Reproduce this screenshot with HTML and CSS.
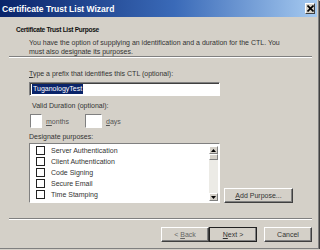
FILE: index.html
```html
<!DOCTYPE html>
<html lang="en">
<head>
    <meta charset="UTF-8">
    <title>Certificate Trust List Wizard</title>
    <link rel="stylesheet" href="styles.css">
</head>
<body>
    <div class="window">
        <!-- Title bar -->
        <div class="titlebar">
            <span class="title">Certificate Trust List Wizard</span>
            <span class="close">
                <svg width="7" height="7" viewBox="0 0 7 7"><path d="M0.5 0.5 L6.5 6.5 M6.5 0.5 L0.5 6.5" stroke="#000" stroke-width="1.6"/></svg>
            </span>
        </div>

        <!-- Header -->
        <div class="header">
            <h2>Certificate Trust List Purpose</h2>
            <p>You have the option of supplying an identification and a duration for the CTL. You must also designate its purposes.</p>
        </div>
        <div class="rule"></div>

        <!-- Body -->
        <div class="content">
            <label class="field-label"><u>T</u>ype a prefix that identifies this CTL (optional):</label>
            <div class="textbox"><span class="selected">TuganologyTest</span></div>

            <label class="field-label duration-label">Valid Duration (optional):</label>
            <div class="duration">
                <div class="smallbox"></div>
                <span class="unit"><u>m</u>onths</span>
                <div class="smallbox wide"></div>
                <span class="unit"><u>d</u>ays</span>
            </div>

            <label class="field-label">Designate purposes:</label>
            <div class="purpose-row">
                <div class="listbox">
                    <ul class="items">
                        <li><span class="check"></span>Server Authentication</li>
                        <li><span class="check"></span>Client Authentication</li>
                        <li><span class="check"></span>Code Signing</li>
                        <li><span class="check"></span>Secure Email</li>
                        <li><span class="check"></span>Time Stamping</li>
                    </ul>
                    <div class="scrollbar">
                        <div class="arrow">
                            <svg width="5" height="3" viewBox="0 0 5 3"><path d="M2.5 0 L5 3 L0 3 Z" fill="#000"/></svg>
                        </div>
                        <div class="thumb"></div>
                        <div class="track"></div>
                        <div class="arrow">
                            <svg width="5" height="3" viewBox="0 0 5 3"><path d="M0 0 L5 0 L2.5 3 Z" fill="#000"/></svg>
                        </div>
                    </div>
                </div>
                <button class="button add-btn"><u>A</u>dd Purpose...</button>
            </div>
        </div>

        <div class="rule"></div>

        <!-- Navigation buttons -->
        <div class="nav">
            <button class="button"><span class="dim">&lt; <u>B</u>ack</span></button>
            <button class="button default"><u>N</u>ext &gt;</button>
            <button class="button cancel">Cancel</button>
        </div>
    </div>
</body>
</html>
```

FILE: styles.css
```css
body {
    margin: 0;
    padding: 0;
    background: #d4d0c8;
    font-family: "Liberation Sans", Arial, sans-serif;
    font-size: 7px;
    color: #1e1e1e;
}

.window {
    width: 318px;
    height: 248px;
    background: #d4d0c8;
    border-right: 1px solid #808080;
    border-bottom: 1px solid #808080;
    box-shadow: 1px 1px 0 #404040;
    display: flex;
    flex-direction: column;
}

.titlebar {
    height: 17px;
    margin-right: 1px;
    background: linear-gradient(to right, #0a246a, #3a6ab8 55%, #a6caf0);
    display: flex;
    align-items: center;
    justify-content: space-between;
    padding: 0 2px 0 2px;
}

.title {
    color: #fff;
    font-weight: bold;
    font-size: 8.5px;
}

.close {
    width: 8px;
    height: 9px;
    background: #d4d0c8;
    border: 1px solid;
    border-color: #fff #404040 #404040 #fff;
    display: flex;
    align-items: center;
    justify-content: center;
}

.header {
    padding: 9px 0 0 16px;
    height: 30px;
}

.header h2 {
    margin: 0 0 4px 0;
    font-size: 6.6px;
    line-height: 8px;
    font-weight: bold;
    letter-spacing: -0.3px;
    color: #111;
}

.header p {
    margin: 0 0 0 13px;
    width: 260px;
    line-height: 9px;
    color: #333;
}

.rule {
    margin: 0 6px 0 9px;
    border-top: 1px solid #808080;
    border-bottom: 1px solid #fff;
}

.content {
    padding: 11px 0 0 29px;
    height: 149px;
}

.field-label {
    display: block;
    color: #333;
    line-height: 9px;
}

.textbox {
    width: 187px;
    height: 11px;
    margin: 4px 0 5px 0;
    background: #fff;
    border: 1px solid;
    border-color: #808080 #fff #fff #808080;
    box-shadow: inset 1px 1px 0 #404040;
    padding: 1px 0 0 2px;
}

.selected {
    display: inline-block;
    background: #0a246a;
    color: #fff;
    line-height: 10px;
    padding: 0 1px;
}

.duration-label {
    margin-left: 3px;
}

.duration {
    display: flex;
    align-items: center;
    margin: 4px 0 4px 1px;
}

.smallbox {
    width: 10px;
    height: 12px;
    background: #fff;
    border: 1px solid;
    border-color: #808080 #fff #fff #808080;
}

.smallbox.wide {
    width: 15px;
    margin-left: 16px;
}

.unit {
    margin-left: 4px;
    color: #555;
}

.purpose-row {
    display: flex;
    align-items: flex-end;
    margin-top: 2px;
}

.listbox {
    width: 189px;
    height: 58px;
    background: #fff;
    border: 1px solid;
    border-color: #808080 #fff #fff #808080;
    display: flex;
    overflow: hidden;
}

.items {
    list-style: none;
    margin: 0;
    padding: 1px 0 0 6px;
    flex: 1;
}

.items li {
    height: 11px;
    display: flex;
    align-items: center;
    color: #333;
}

.check {
    width: 7px;
    height: 7px;
    border: 1px solid #222;
    margin-right: 6px;
}

.scrollbar {
    width: 9px;
    display: flex;
    flex-direction: column;
    background: #ecebe6;
    margin: 2px 1px 1px 0;
}

.arrow {
    height: 8px;
    background: #d4d0c8;
    border: 1px solid;
    border-color: #fff #808080 #808080 #fff;
    box-sizing: border-box;
    display: flex;
    align-items: center;
    justify-content: center;
}

.thumb {
    height: 6px;
    background: #d4d0c8;
    border: 1px solid;
    border-color: #fff #808080 #808080 #fff;
    box-sizing: border-box;
}

.track {
    flex: 1;
}

.button {
    font-family: "Liberation Sans", Arial, sans-serif;
    font-size: 7px;
    color: #333;
    background: #d4d0c8;
    border: 1px solid;
    border-color: #fff #404040 #404040 #fff;
    box-shadow: inset -1px -1px 0 #808080;
    height: 15px;
    padding: 0;
}

.add-btn {
    width: 69px;
    margin-left: 4px;
}

.nav {
    display: flex;
    justify-content: flex-end;
    padding: 7px 6px 0 0;
}

.nav .button {
    width: 48px;
}

.nav .default {
    outline: 1px solid #222;
    outline-offset: -1px;
}

.nav .cancel {
    margin-left: 7px;
}

.dim {
    color: #666;
}
```
